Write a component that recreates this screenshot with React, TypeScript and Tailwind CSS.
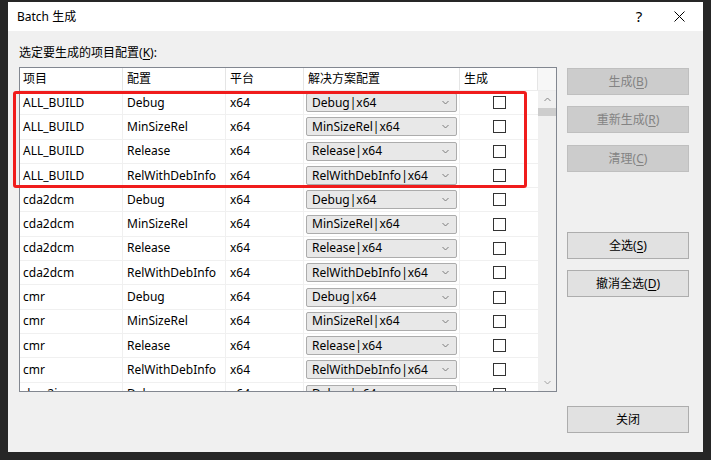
import React from 'react';

const CONFIGS = ['Debug', 'MinSizeRel', 'Release', 'RelWithDebInfo'];
const ROWS = [
  ...['ALL_BUILD', 'cda2dcm', 'cmr'].flatMap((p) => CONFIGS.map((c) => ({ project: p, config: c }))),
  { project: 'dcm2json', config: 'Debug' },
];

function Chevron({ up = false, color = '#7a7a7a' }: { up?: boolean; color?: string }) {
  return (
    <svg width="7" height="5" viewBox="0 0 7 5">
      <polyline
        points={up ? '0.5,4 3.5,1 6.5,4' : '0.5,1 3.5,4 6.5,1'}
        fill="none"
        stroke={color}
        strokeWidth="1"
      />
    </svg>
  );
}

function Hotkey({ text, k }: { text: string; k: string }) {
  return (
    <span>
      {text}(<span className="underline underline-offset-2">{k}</span>)
    </span>
  );
}

function DlgButton({ text, k, disabled, className }: { text: string; k?: string; disabled?: boolean; className: string }) {
  return (
    <div
      className={`${className} h-[27px] w-[122px] flex items-center justify-center border ${
        disabled ? 'bg-[#cccccc] border-[#bfbfbf] text-[#838383]' : 'bg-[#e1e1e1] border-[#adadad] text-black'
      }`}
    >
      {k ? <Hotkey text={text} k={k} /> : text}
    </div>
  );
}

export default function App() {
  return (
    <div className="relative w-[711px] h-[460px] bg-[#262626] pt-[2px] pl-[8px] text-[12px] text-black font-['Noto_Sans','Noto_Sans_CJK_SC',sans-serif]">
      <div className="w-[695px] h-[450px] bg-[#f0f0f0] flex flex-col">
        {/* title bar */}
        <div className="h-[29px] bg-white flex items-center pl-[9px]">
          <span className="flex-1">Batch 生成</span>
          <span className="text-[15px] w-[20px] text-center mr-[25px]">?</span>
          <svg width="11" height="11" viewBox="0 0 11 11" className="mr-[18px]">
            <path d="M0.5 0.5 L10.5 10.5 M10.5 0.5 L0.5 10.5" stroke="#000" strokeWidth="1" />
          </svg>
        </div>

        <div className="pl-[11px]">
          <div className="mt-[14px] h-[16px] leading-[16px]">
            <Hotkey text="选定要生成的项目配置" k="K" />:
          </div>

          <div className="mt-[6px] flex">
            {/* list */}
            <div className="w-[538px] h-[325px] border border-[#828790] bg-white flex flex-col overflow-hidden">
              <div className="h-[23px] flex border-b border-[#ececec] shrink-0">
                <div className="w-[103px] pl-[3px] flex items-center border-r border-[#e5e5e5]">项目</div>
                <div className="w-[103px] pl-[4px] flex items-center border-r border-[#e5e5e5]">配置</div>
                <div className="w-[78px] pl-[4px] flex items-center border-r border-[#e5e5e5]">平台</div>
                <div className="w-[156px] pl-[4px] flex items-center border-r border-[#e5e5e5]">解决方案配置</div>
                <div className="w-[78px] pl-[4px] flex items-center border-r border-[#e5e5e5]">生成</div>
                <div className="flex-1 bg-[#f7f7f7]" />
              </div>
              <div className="flex flex-1 min-h-0">
                <div className="flex-1 overflow-hidden">
                  {ROWS.map((r, i) => (
                    <div key={i} className="h-[24.3px] flex border-b border-[#f0f0f0]">
                      <div className="w-[103px] pl-[3px] flex items-center border-r border-[#f0f0f0]">{r.project}</div>
                      <div className="w-[103px] pl-[4px] flex items-center border-r border-[#f0f0f0]">{r.config}</div>
                      <div className="w-[78px] pl-[4px] flex items-center border-r border-[#f0f0f0]">x64</div>
                      <div className="w-[156px] px-[2px] flex items-center border-r border-[#f0f0f0]">
                        <div className="w-full h-[19px] rounded-[2px] border border-[#acacac] bg-[#e8e8e8] flex items-center pl-[5px] pr-[7px]">
                          <span className="flex-1">{r.config}|x64</span>
                          <Chevron />
                        </div>
                      </div>
                      <div className="w-[78px] flex items-center justify-center">
                        <div className="w-[13px] h-[13px] border border-[#333333] bg-white" />
                      </div>
                    </div>
                  ))}
                </div>
                <div className="w-[18px] bg-[#f0f0f0] flex flex-col">
                  <div className="h-[17px] flex items-center justify-center">
                    <Chevron up color="#868686" />
                  </div>
                  <div className="h-[8px] bg-[#cdcdcd]" />
                  <div className="flex-1" />
                  <div className="h-[17px] flex items-center justify-center">
                    <Chevron color="#a0a0a0" />
                  </div>
                </div>
              </div>
            </div>

            {/* buttons */}
            <div className="ml-[10px] flex flex-col">
              <DlgButton className="mt-[1px]" text="生成" k="B" disabled />
              <DlgButton className="mt-[11px]" text="重新生成" k="R" disabled />
              <DlgButton className="mt-[12px]" text="清理" k="C" disabled />
              <DlgButton className="mt-[60px]" text="全选" k="S" />
              <DlgButton className="mt-[11px]" text="撤消全选" k="D" />
              <DlgButton className="mt-[109px]" text="关闭" />
            </div>
          </div>
        </div>
      </div>

      {/* annotation */}
      <div className="absolute left-[13px] top-[91px] w-[514px] h-[97px] border-[3px] border-[#f01c1c] rounded-[3px]" />
    </div>
  );
}
